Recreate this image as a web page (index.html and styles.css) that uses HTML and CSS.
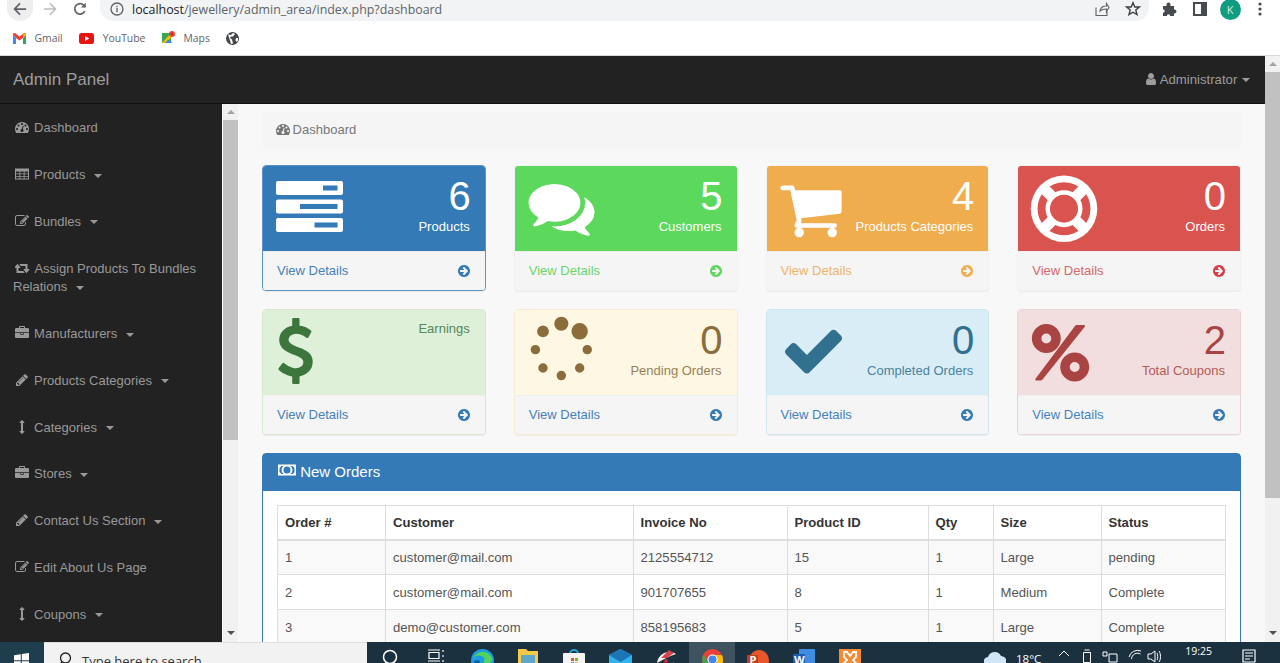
FILE: index.html
```html
<!DOCTYPE html>
<html lang="en">

<head>
    <meta charset="UTF-8">
    <title>Admin Panel</title>
    <link rel="stylesheet" href="styles.css">
</head>

<body>

    <!-- icon set -->
    <svg class="sprites" xmlns="http://www.w3.org/2000/svg">
        <symbol id="i-dashboard" viewBox="0 0 1792 1792"><path d="M384 1152q0-53-37.5-90.5t-90.5-37.5-90.5 37.5-37.5 90.5 37.5 90.5 90.5 37.5 90.5-37.5 37.5-90.5zm192-448q0-53-37.5-90.5t-90.5-37.5-90.5 37.5-37.5 90.5 37.5 90.5 90.5 37.5 90.5-37.5 37.5-90.5zm428 481l101-382q6-26-7.5-48.5t-38.5-29.5-48 7-30 39l-101 382q-60 5-107 43.5t-63 98.5q-20 77 20 146t117 89 146-20 89-117q16-60-6-117t-72-91zm660-33q0-53-37.5-90.5t-90.5-37.5-90.5 37.5-37.5 90.5 37.5 90.5 90.5 37.5 90.5-37.5 37.5-90.5zm-640-640q0-53-37.5-90.5t-90.5-37.5-90.5 37.5-37.5 90.5 37.5 90.5 90.5 37.5 90.5-37.5 37.5-90.5zm448 192q0-53-37.5-90.5t-90.5-37.5-90.5 37.5-37.5 90.5 37.5 90.5 90.5 37.5 90.5-37.5 37.5-90.5zm320 448q0 261-141 483-19 29-54 29h-1402q-35 0-54-29-141-221-141-483 0-182 71-348t191-286 286-191 348-71 348 71 286 191 191 286 71 348z"/></symbol>
        <symbol id="i-table" viewBox="0 0 14 14"><path fill-rule="evenodd" d="M0 1.5h14v11H0zM1 4.5v2h3.4v-2zM5.3 4.5v2h3.4v-2zM9.6 4.5v2H13v-2zM1 7.3v2h3.4v-2zM5.3 7.3v2h3.4v-2zM9.6 7.3v2H13v-2zM1 10v1.6h3.4V10zM5.3 10v1.6h3.4V10zM9.6 10v1.6H13V10z"/></symbol>
        <symbol id="i-edit" viewBox="0 0 1792 1792"><path d="M888 1184l116-116-152-152-116 116v56h96v96h56zm440-720q-16-16-33 1l-350 350q-17 17-1 33t33-1l350-350q17-17 1-33zm80 594v190q0 119-84.5 203.5t-203.5 84.5h-832q-119 0-203.5-84.5t-84.5-203.5v-832q0-119 84.5-203.5t203.5-84.5h832q63 0 117 25 15 7 18 23 3 17-9 29l-49 49q-14 14-32 8-23-6-45-6h-832q-66 0-113 47t-47 113v832q0 66 47 113t113 47h832q66 0 113-47t47-113v-126q0-13 9-22l64-64q15-15 35-7t20 29zm-96-738l288 288-672 672h-288v-288zm444 132l-92 92-288-288 92-92q28-28 68-28t68 28l152 152q28 28 28 68t-28 68z"/></symbol>
        <symbol id="i-retweet" viewBox="0 0 1920 1792"><path d="M1216 1504q0 13-9.5 22.5t-22.5 9.5h-960q-8 0-13.5-2t-9-7-5.5-8-3-11.5-1-11.5v-600h-192q-26 0-45-19t-19-45q0-24 15-41l320-384q19-22 49-22t49 22l320 384q15 17 15 41 0 26-19 45t-45 19h-192v384h576q16 0 25 11l160 192q7 10 7 21zm640-416q0 24-15 41l-320 384q-20 23-49 23t-49-23l-320-384q-15-17-15-41 0-26 19-45t45-19h192v-384h-576q-16 0-25-12l-160-192q-7-9-7-20 0-13 9.5-22.5t22.5-9.5h960q8 0 13.5 2t9 7 5.5 8 3 11.5 1 11.5v600h192q26 0 45 19t19 45z"/></symbol>
        <symbol id="i-briefcase" viewBox="0 0 1792 1792"><path d="M640 256h512v-128h-512v128zm1152 640v480q0 66-47 113t-113 47h-1472q-66 0-113-47t-47-113v-480h672v160q0 26 19 45t45 19h320q26 0 45-19t19-45v-160h672zm-768 0v128h-256v-128h256zm768-480v384h-1792v-384q0-66 47-113t113-47h352v-160q0-40 28-68t68-28h576q40 0 68 28t28 68v160h352q66 0 113 47t47 113z"/></symbol>
        <symbol id="i-pencil" viewBox="0 0 1792 1792"><path d="M491 1536l91-91-235-235-91 91v107h128v128h107zm523-928q0-22-22-22-10 0-17 7l-542 542q-7 7-7 17 0 22 22 22 10 0 17-7l542-542q7-7 7-17zm-54-192l416 416-832 832h-416v-416zm683 96q0 53-37 90l-166 166-416-416 166-165q36-38 90-38 53 0 91 38l235 234q37 39 37 91z"/></symbol>
        <symbol id="i-arrows-v" viewBox="0 0 1792 1792"><path d="M1216 320q0 26-19 45t-45 19h-128v1024h128q26 0 45 19t19 45-19 45l-256 256q-19 19-45 19t-45-19l-256-256q-19-19-19-45t19-45 45-19h128v-1024h-128q-26 0-45-19t-19-45 19-45l256-256q19-19 45-19t45 19l256 256q19 19 19 45z"/></symbol>
        <symbol id="i-user" viewBox="0 0 1792 1792"><path d="M1536 1399q0 109-62.5 187t-150.5 78h-854q-88 0-150.5-78t-62.5-187q0-85 8.5-160.5t31.5-152 58.5-131 94-89 134.5-34.5q131 128 313 128t313-128q76 0 134.5 34.5t94 89 58.5 131 31.5 152 8.5 160.5zm-256-887q0 159-112.5 271.5t-271.5 112.5-271.5-112.5-112.5-271.5 112.5-271.5 271.5-112.5 271.5 112.5 112.5 271.5z"/></symbol>
        <symbol id="i-arrow" viewBox="0 0 1792 1792"><path d="M1413 896q0-27-18-45l-91-91-362-362q-18-18-45-18t-45 18l-91 91q-18 18-18 45t18 45l189 189h-502q-26 0-45 19t-19 45v128q0 26 19 45t45 19h502l-189 189q-19 19-19 45t19 45l91 91q18 18 45 18t45-18l362-362 91-91q18-18 18-45zm251 0q0 209-103 385.5t-279.5 279.5-385.5 103-385.5-103-279.5-279.5-103-385.5 103-385.5 279.5-279.5 385.5-103 385.5 103 279.5 279.5 103 385.5z"/></symbol>
    </svg>

    <header class="browser">
        <div class="toolbar">
            <div class="tool-btn tool-back">
                <svg width="14" height="14" viewBox="0 0 16 16" fill="none" stroke="#5f6368" stroke-width="2"><path d="M15 8H2M8 1.5 1.8 8 8 14.5"/></svg>
            </div>
            <div class="tool-btn">
                <svg width="14" height="14" viewBox="0 0 16 16" fill="none" stroke="#b9bbbe" stroke-width="1.8"><path d="M1 8h13M8 1.5 14.2 8 8 14.5"/></svg>
            </div>
            <div class="tool-btn">
                <svg width="14" height="14" viewBox="0 0 16 16" fill="none" stroke="#5f6368" stroke-width="2"><path d="M13.4 10.5A6 6 0 1 1 12.3 3.6L14 5.5"/><path d="M14.6 0.8v5.6H9" fill="#5f6368" stroke="none"/></svg>
            </div>
            <div class="omnibox">
                <svg class="omni-info" width="14" height="14" viewBox="0 0 15 15" fill="none" stroke="#5f6368" stroke-width="1.4"><circle cx="7.5" cy="7.5" r="6.4"/><path d="M7.5 6.5v4.5M7.5 4v1.6"/></svg>
                <span class="url"><b>localhost</b>/jewellery/admin_area/index.php?dashboard</span>
                <svg class="omni-share" width="16" height="16" viewBox="0 0 16 16" fill="none" stroke="#5f6368" stroke-width="1.1"><path d="M2 6.5v8h11v-4M6 10c.5-3.5 3-5 6.5-5V2.5L15 6.5l-2.5 4V8C9.5 8 7.5 8.5 6 10z"/></svg>
                <svg class="omni-star" width="16" height="16" viewBox="0 0 16 16" fill="none" stroke="#3c4043" stroke-width="1.4"><path d="M8 1.8 9.8 6h4.6l-3.6 3 1.2 4.6L8 11.2l-4 2.4L5.2 9 1.6 6h4.6z"/></svg>
            </div>
            <div class="ext-btn">
                <svg width="16" height="16" viewBox="0 0 16 16" fill="#474a4e"><path d="M1 5h3.5V3.5a2 2 0 0 1 4 0V5H12v3.5h.5a2 2 0 0 1 0 4H12V15H8v-1a2 2 0 0 0-3 0v1H1v-3.5h1a2 2 0 0 0 0-3H1z"/></svg>
            </div>
            <div class="ext-btn">
                <svg width="14" height="14" viewBox="0 0 14 14" fill="none" stroke="#474a4e" stroke-width="2"><path d="M1 1h12v12H1z"/><path d="M10 1v12" stroke-width="4"/></svg>
            </div>
            <div class="ext-btn"><span class="avatar">K</span></div>
            <div class="ext-btn">
                <svg width="4" height="14" viewBox="0 0 4 14" fill="#474a4e"><circle cx="2" cy="2" r="1.6"/><circle cx="2" cy="7" r="1.6"/><circle cx="2" cy="12" r="1.6"/></svg>
            </div>
        </div>
        <nav class="bookmarks">
            <a class="bookmark">
                <svg width="13" height="11" viewBox="0 0 13 11"><path d="M0 1.5V11h3V5z" fill="#4285f4"/><path d="M13 1.5V11h-3V5z" fill="#34a853"/><path d="M0 1.5C0 0 1.6-.4 2.6.4L6.5 3.4 10.4.4C11.4-.4 13 0 13 1.5L10 5 6.5 7.6 3 5z" fill="#ea4335"/><path d="M10 1.3 13 0v2l-3 3z" fill="#fbbc04"/></svg>
                Gmail
            </a>
            <a class="bookmark">
                <svg width="15" height="11" viewBox="0 0 15 11"><rect width="15" height="11" rx="2.8" fill="#e8140f"/><path d="M6 3v5l4.2-2.500z" fill="#fff"/></svg>
                YouTube
            </a>
            <a class="bookmark">
                <svg width="13" height="14" viewBox="0 0 13 14"><path d="M0 2h9v10H0z" fill="#34a853"/><path d="M0 12 9 2h2v3L3 12z" fill="#fbbc04"/><path d="M3 12 6 9l5 3z" fill="#4285f4"/><circle cx="10" cy="3" r="3" fill="#ea4335"/><circle cx="10" cy="3" r="1" fill="#a52714"/></svg>
                Maps
            </a>
            <a class="bookmark">
                <svg width="13" height="13" viewBox="0 0 13 13"><circle cx="6.5" cy="6.5" r="6.5" fill="#45474a"/><path d="M2 2.5 5 3l2-2 2 1-2 2.5H5L4 6l2 1.5 1 4-2 .5-1-3.5zM10 6h2v2.5L10.5 10 9.5 8z" fill="#fff"/></svg>
            </a>
        </nav>
    </header>

    <div class="app">
        <div class="app-page">
            <div class="navbar">
                <a class="brand">Admin Panel</a>
                <a class="user-menu">
                    <svg class="fa"><use href="#i-user"/></svg>
                    Administrator <span class="caret"></span>
                </a>
            </div>

            <div class="app-body">
                <ul class="sidebar">
                    <li><svg class="fa"><use href="#i-dashboard"/></svg> Dashboard</li>
                    <li><svg class="fa"><use href="#i-table"/></svg> Products <span class="caret"></span></li>
                    <li><svg class="fa"><use href="#i-edit"/></svg> Bundles <span class="caret"></span></li>
                    <li><svg class="fa fa-wide"><use href="#i-retweet"/></svg> Assign Products To Bundles Relations <span class="caret"></span></li>
                    <li><svg class="fa"><use href="#i-briefcase"/></svg> Manufacturers <span class="caret"></span></li>
                    <li><svg class="fa"><use href="#i-pencil"/></svg> Products Categories <span class="caret"></span></li>
                    <li><svg class="fa"><use href="#i-arrows-v"/></svg> Categories <span class="caret"></span></li>
                    <li><svg class="fa"><use href="#i-briefcase"/></svg> Stores <span class="caret"></span></li>
                    <li><svg class="fa"><use href="#i-pencil"/></svg> Contact Us Section <span class="caret"></span></li>
                    <li><svg class="fa"><use href="#i-edit"/></svg> Edit About Us Page</li>
                    <li><svg class="fa"><use href="#i-arrows-v"/></svg> Coupons <span class="caret"></span></li>
                </ul>
                <div class="scrollbar scrollbar-side">
                    <span class="arrow-up"></span>
                    <span class="thumb thumb-side"></span>
                    <span class="arrow-down"></span>
                </div>

                <main class="content">
                    <div class="breadcrumb"><svg class="fa"><use href="#i-dashboard"/></svg> Dashboard</div>

                    <div class="stats">
                        <div class="stat stat-primary">
                            <div class="stat-head">
                                <svg class="stat-icon" viewBox="0 0 66 66">
                                    <rect y="5" width="67" height="14" rx="2" fill="#fff"/>
                                    <rect x="47" y="9.5" width="14.5" height="5" fill="#337ab7"/>
                                    <rect y="23.5" width="67" height="14" rx="2" fill="#fff"/>
                                    <rect x="24" y="28" width="37.5" height="5" fill="#337ab7"/>
                                    <rect y="42" width="67" height="14" rx="2" fill="#fff"/>
                                    <rect x="38.5" y="46.5" width="23" height="5" fill="#337ab7"/>
                                </svg>
                                <div class="stat-text"><div class="huge">6</div><div>Products</div></div>
                            </div>
                            <a class="stat-foot">View Details <svg class="fa-arrow"><use href="#i-arrow"/></svg></a>
                        </div>
                        <div class="stat stat-green">
                            <div class="stat-head">
                                <svg class="stat-icon" viewBox="-15 40 1792 1792"><path d="M1408 768q0 139-94 257t-256.5 186.5-353.5 68.5q-86 0-176-16-124 88-278 128-36 9-86 16h-3q-11 0-20.5-8t-11.5-21q-1-3-1-6.5t.5-6.5 2-6l2.5-5 3.5-5.5 4-5 4.5-5 4-4.5q5-6 23-25t26-29.5 22.5-29 25-38.5 20.5-44q-124-72-195-177t-71-224q0-139 94-257t256.5-186.5 353.5-68.5 353.5 68.5 256.5 186.5 94 257zm384 256q0 120-71 224.5t-195 176.5q10 24 20.5 44t25 38.5 22.5 29 26 29.5 23 25q1 1 4 4.5t4.5 5 4 5 3.5 5.5l2.5 5 2 6 .5 6.5-1 6.5q-3 14-13 22t-22 7q-50-7-86-16-154-40-278-128-90 16-176 16-271 0-472-132 58 4 88 4 161 0 309-45t264-129q125-92 192-212t67-254q0-77-23-152 129 71 204 178t75 230z"/></svg>
                                <div class="stat-text"><div class="huge">5</div><div>Customers</div></div>
                            </div>
                            <a class="stat-foot">View Details <svg class="fa-arrow"><use href="#i-arrow"/></svg></a>
                        </div>
                        <div class="stat stat-orange">
                            <div class="stat-head">
                                <svg class="stat-icon" viewBox="54 0 1792 1792"><path d="M704 1536q0 52-38 90t-90 38-90-38-38-90 38-90 90-38 90 38 38 90zm896 0q0 52-38 90t-90 38-90-38-38-90 38-90 90-38 90 38 38 90zm128-1088v512q0 24-16.5 42.5t-40.5 21.5l-1044 122q13 60 13 70 0 16-24 64h920q26 0 45 19t19 45-19 45-45 19h-1024q-26 0-45-19t-19-45q0-11 8-31.5t16-36 21.5-40 15.5-29.5l-177-823h-204q-26 0-45-19t-19-45 19-45 45-19h256q16 0 28.5 6.5t19.5 15.5 13 24.5 8 26 5.5 29.5 4.5 26h1201q26 0 45 19t19 45z"/></svg>
                                <div class="stat-text"><div class="huge">4</div><div>Products Categories</div></div>
                            </div>
                            <a class="stat-foot">View Details <svg class="fa-arrow"><use href="#i-arrow"/></svg></a>
                        </div>
                        <div class="stat stat-red">
                            <div class="stat-head">
                                <svg class="stat-icon" viewBox="0 0 66 66">
                                    <circle cx="33" cy="32.7" r="33.3" fill="#fff"/>
                                    <circle cx="33" cy="32.7" r="26.5" fill="#d9534f"/>
                                    <path d="M12 11.7 54 53.7M54 11.7 12 53.7" stroke="#fff" stroke-width="11"/>
                                    <circle cx="33" cy="32.7" r="18.5" fill="#fff"/>
                                    <circle cx="33" cy="32.7" r="14" fill="#d9534f"/>
                                </svg>
                                <div class="stat-text"><div class="huge">0</div><div>Orders</div></div>
                            </div>
                            <a class="stat-foot">View Details <svg class="fa-arrow"><use href="#i-arrow"/></svg></a>
                        </div>

                        <div class="stat stat-success">
                            <div class="stat-head">
                                <svg class="stat-icon" viewBox="365 54 1792 1792"><path d="M1362 1185q0 153-99.5 263.5t-258.5 136.5v175q0 14-9 23t-23 9h-135q-13 0-22.5-9.5t-9.5-22.5v-175q-66-9-127.5-31t-101.5-44.5-74-48-46.5-37.5-17.5-18q-17-21-2-41l103-135q7-10 23-12 15-2 24 9l2 2q113 99 243 125 37 8 74 8 81 0 142.5-43t61.5-122q0-28-15-53t-33.5-42-58.5-37.5-66-32-80-32.5q-39-16-61.5-25t-61.5-26.5-62.5-31-56.5-35.5-53.5-42.5-43.5-49-35.5-58-21-66.5-8.5-78q0-138 98-242t255-134v-180q0-13 9.5-22.5t22.5-9.5h135q14 0 23 9t9 23v176q57 6 110.5 23t87 33.5 63.5 37.5 39 29 15 14q17 18 5 38l-81 146q-8 15-23 16-14 3-27-7-3-3-14.5-12t-39-26.5-58.5-32-74.5-26-85.5-11.5q-95 0-155 43t-60 111q0 26 8.5 48t29.5 41.5 39.5 33 56 31 60.5 27 70 27.5q53 20 81 31.5t76 35 75.5 42.5 62 50 53 63.5 31.5 76.5 13 94z"/></svg>
                                <div class="stat-text"><div class="soft">Earnings</div></div>
                            </div>
                            <a class="stat-foot">View Details <svg class="fa-arrow"><use href="#i-arrow"/></svg></a>
                        </div>
                        <div class="stat stat-warning">
                            <div class="stat-head">
                                <svg class="stat-icon" viewBox="-9 91 1792 1792"><path d="M526 1394q0 53-37.5 90.5t-90.5 37.5q-52 0-90-38t-38-90q0-53 37.5-90.5t90.5-37.5 90.5 37.5 37.5 90.5zm498 206q0 53-37.5 90.5t-90.5 37.5-90.5-37.5-37.5-90.5 37.5-90.5 90.5-37.5 90.5 37.5 37.5 90.5zm-704-704q0 53-37.5 90.5t-90.5 37.5-90.5-37.5-37.5-90.5 37.5-90.5 90.5-37.5 90.5 37.5 37.5 90.5zm1202 498q0 52-38 90t-90 38q-53 0-90.5-37.5t-37.5-90.5 37.5-90.5 90.5-37.5 90.5 37.5 37.5 90.5zm-964-996q0 66-47 113t-113 47-113-47-47-113 47-113 113-47 113 47 47 113zm1170 498q0 53-37.5 90.5t-90.5 37.5-90.5-37.5-37.5-90.5 37.5-90.5 90.5-37.5 90.5 37.5 37.5 90.5zm-640-704q0 80-56 136t-136 56-136-56-56-136 56-136 136-56 136 56 56 136zm530 206q0 93-66 158.5t-158 65.5q-93 0-158.5-65.5t-65.5-158.5q0-92 65.5-158t158.5-66q92 0 158 66t66 158z"/></svg>
                                <div class="stat-text"><div class="huge">0</div><div class="soft">Pending Orders</div></div>
                            </div>
                            <a class="stat-foot">View Details <svg class="fa-arrow"><use href="#i-arrow"/></svg></a>
                        </div>
                        <div class="stat stat-info">
                            <div class="stat-head">
                                <svg class="stat-icon" viewBox="-15 69 1792 1792"><path d="M1671 566q0 40-28 68l-724 724-136 136q-28 28-68 28t-68-28l-136-136-362-362q-28-28-28-68t28-68l136-136q28-28 68-28t68 28l294 295 656-657q28-28 68-28t68 28l136 136q28 28 28 68z"/></svg>
                                <div class="stat-text"><div class="huge">0</div><div class="soft">Completed Orders</div></div>
                            </div>
                            <a class="stat-foot">View Details <svg class="fa-arrow"><use href="#i-arrow"/></svg></a>
                        </div>
                        <div class="stat stat-danger">
                            <div class="stat-head">
                                <svg class="stat-icon" viewBox="0 0 66 66">
                                    <circle cx="15.3" cy="18.5" r="9.7" fill="none" stroke="#a94442" stroke-width="9.5"/>
                                    <circle cx="43.7" cy="47" r="9.7" fill="none" stroke="#a94442" stroke-width="9.5"/>
                                    <path d="M46 5h6.8c1 0 1.5 1 1 1.8L11.5 59.5c-.5.7-1 1-1.8 1H5.5c-1 0-1.5-1-1-1.8L44 6c.5-.7 1-1 2-1z" fill="#a94442"/>
                                </svg>
                                <div class="stat-text"><div class="huge">2</div><div class="soft">Total Coupons</div></div>
                            </div>
                            <a class="stat-foot">View Details <svg class="fa-arrow"><use href="#i-arrow"/></svg></a>
                        </div>
                    </div>

                    <section class="orders">
                        <h3 class="orders-title">
                            <svg width="18" height="14" viewBox="0 0 18 14"><path fill="#fff" fill-rule="evenodd" d="M0 1.5h18v11H0zM9 3.5a3.5 3.5 0 1 0 0 7 3.5 3.5 0 0 0 0-7zM3.5 3 1.5 5v4l2 2h2A5 5 0 0 1 5.5 3zM14.5 3h-2a5 5 0 0 1 0 8h2l2-2V5z"/></svg>
                            New Orders
                        </h3>
                        <div class="orders-body">
                            <table class="orders-table">
                                <thead>
                                    <tr><th class="col-order">Order #</th><th class="col-customer">Customer</th><th class="col-invoice">Invoice No</th><th class="col-product">Product ID</th><th class="col-qty">Qty</th><th class="col-size">Size</th><th>Status</th></tr>
                                </thead>
                                <tbody>
                                    <tr><td>1</td><td>customer@mail.com</td><td>2125554712</td><td>15</td><td>1</td><td>Large</td><td>pending</td></tr>
                                    <tr><td>2</td><td>customer@mail.com</td><td>901707655</td><td>8</td><td>1</td><td>Medium</td><td>Complete</td></tr>
                                    <tr><td>3</td><td>demo@customer.com</td><td>858195683</td><td>5</td><td>1</td><td>Large</td><td>Complete</td></tr>
                                </tbody>
                            </table>
                        </div>
                    </section>
                </main>
            </div>
        </div>
        <div class="scrollbar scrollbar-page">
            <span class="arrow-up"></span>
            <span class="thumb thumb-page"></span>
            <span class="arrow-down"></span>
        </div>
    </div>

    <footer class="taskbar">
        <div class="start">
            <svg width="15" height="15" viewBox="0 0 15 15" fill="#fff"><path d="M0 2.2 6.8 1.2v6H0zM7.8 1 15 0v7.2H7.800zM0 8.2h6.8v6L0 13.2zM7.800 8.2H15V15l-7.200-1z"/></svg>
        </div>
        <div class="search">
            <svg width="15" height="15" viewBox="0 0 15 15" fill="none" stroke="#222" stroke-width="1.3"><circle cx="8.5" cy="6" r="5"/><path d="M5 10 1 14"/></svg>
            Type here to search
        </div>
        <div class="task-slot">
            <svg width="16" height="16" viewBox="0 0 16 16" fill="none" stroke="#fff" stroke-width="1.5"><circle cx="8" cy="8" r="6.5"/></svg>
        </div>
        <div class="task-slot">
            <svg width="18" height="16" viewBox="0 0 18 16" fill="none" stroke="#fff" stroke-width="1.2"><path d="M1 1h12M1 12h12M2 3.5h10v6H2zM16 1v2M16 6v2M16 11v2"/></svg>
        </div>
        <div class="task-slot">
            <svg width="23" height="23" viewBox="0 0 23 23"><circle cx="11.5" cy="11.5" r="11.5" fill="#1b9de2"/><path d="M2 10C4 2 17 0 21 9c1 4-3 6-7 5-2-1-1-3 0-4C10 5 4 6 2 10z" fill="#53d35a"/><path d="M3 12c0 6 5 10 10 8-4 0-6-4-4-8-2-1-4-1-6 0z" fill="#0c59a4"/></svg>
        </div>
        <div class="task-slot">
            <svg width="20" height="18" viewBox="0 0 20 18"><path d="M0 0h8l2 2h10v16H0z" fill="#f7c948"/><path d="M3 6h14v12H3z" fill="#5ea8c9"/></svg>
        </div>
        <div class="task-slot">
            <svg width="22" height="20" viewBox="0 0 22 20"><path d="M7 5a4 4 0 0 1 8 0" fill="none" stroke="#21a9d8" stroke-width="1.8"/><rect y="4" width="22" height="16" rx="1" fill="#f4f4f4"/><path d="M8 9h3v3H8z" fill="#e8562a"/><path d="M12 9h3v3h-3z" fill="#7cb82a"/><path d="M8 13h3v3H8z" fill="#21a9d8"/><path d="M12 13h3v3h-3z" fill="#f5b81c"/></svg>
        </div>
        <div class="task-slot">
            <svg width="23" height="18" viewBox="0 0 23 18"><path d="M0 6 11.5 0 23 6v12H0z" fill="#31b2ea"/><path d="M0 6 11.5 13 23 6 11.5 0z" fill="#1c75b5"/></svg>
        </div>
        <div class="task-slot">
            <svg width="23" height="20" viewBox="0 0 23 20"><path d="M2 14C3 5 13 0 21 5L13 8 2 14z" fill="#f1f1f1"/><path d="M6 9 14 1l5 3-7 5z" fill="#d8434a"/><circle cx="11" cy="12" r="2" fill="#c4273a"/><path d="M2 16c5 3 12 3 17-2" fill="none" stroke="#4c9fd7" stroke-width="2"/></svg>
        </div>
        <div class="task-slot task-active">
            <svg width="21" height="21" viewBox="0 0 21 21"><circle cx="10.5" cy="10.5" r="10.5" fill="#ea4335"/><path d="M1.5 5.5 6 14l4.5 7A10.5 10.5 0 0 1 1.5 5.5z" fill="#34a853"/><path d="M10.5 6H20a10.5 10.5 0 0 1-9.5 15L15 14z" fill="#fbbc04"/><circle cx="10.5" cy="10.5" r="5" fill="#fff"/><circle cx="10.5" cy="10.5" r="4" fill="#4285f4"/></svg>
        </div>
        <div class="task-slot">
            <svg width="22" height="20" viewBox="0 0 22 20"><circle cx="12" cy="11" r="10" fill="#e8562a"/><rect y="6" width="11" height="11" rx="1" fill="#c43e1c"/><text x="2.5" y="15" class="task-letter">P</text></svg>
        </div>
        <div class="task-slot">
            <svg width="22" height="20" viewBox="0 0 22 20"><rect x="6" width="16" height="20" rx="1" fill="#3f8de0"/><rect y="5" width="12" height="12" rx="1" fill="#1f5cb4"/><text x="1" y="15" class="task-letter">W</text></svg>
        </div>
        <div class="task-slot">
            <svg width="22" height="21" viewBox="0 0 22 21"><rect width="22" height="21" fill="#f48a32"/><path d="M5 3h3l3 4 3-4h3v5l-3 3 3 3v5h-3l-3-4-3 4H5v-5l3-3-3-3z" fill="none" stroke="#fff" stroke-width="1.8"/></svg>
        </div>

        <div class="tray">
            <svg width="22" height="18" viewBox="0 0 22 18"><path d="M5 18a5 5 0 0 1-1-10 7 7 0 0 1 13-1 5.5 5.5 0 0 1 0 11z" fill="#cfe7f8"/></svg>
            <span class="tray-temp">18°C</span>
            <svg class="tray-caret" width="12" height="8" viewBox="0 0 12 8" fill="none" stroke="#fff"><path d="M1 7 6 2l5 5"/></svg>
            <svg class="tray-meet" width="10" height="14" viewBox="0 0 10 14" fill="none" stroke="#fff"><path d="M2.5 1h5M1.5 3.5h7v10h-7z"/></svg>
            <svg width="16" height="14" viewBox="0 0 16 14" fill="none" stroke="#fff"><path d="M1 3h4v4H1zM7 5h8v8H7z"/></svg>
            <svg width="14" height="14" viewBox="0 0 14 14" fill="none" stroke="#fff"><path d="M1 8a9 9 0 0 1 12-6M3.5 10a6 6 0 0 1 9-5"/></svg>
            <svg class="tray-sound" width="14" height="14" viewBox="0 0 14 14" fill="none" stroke="#fff"><path d="M1 5h3l4-3v11l-4-3H1zM10 4c1 2 1 5 0 7M12 2c2 3 2 8 0 11"/></svg>
            <span class="clock">19:25</span>
            <svg class="tray-notes" width="14" height="16" viewBox="0 0 14 16" fill="none" stroke="#fff" stroke-width="1.2"><path d="M1 1h12v12H1zM3 4h8M3 7h8M3 10h5"/></svg>
        </div>
    </footer>

</body>

</html>
```

FILE: styles.css
```css
* {
    box-sizing: border-box;
}

body {
    margin: 0;
    height: 663px;
    overflow: hidden;
    display: flex;
    flex-direction: column;
    font-family: "Liberation Sans", Arial, sans-serif;
    font-size: 14px;
    line-height: 20px;
    color: #333;
    background: #fff;
}

.sprites {
    display: none;
}

/* browser chrome */
.browser {
    height: 56px;
    flex: none;
    border-bottom: 1px solid #d8d8d8;
    font-family: "Open Sans", sans-serif;
}

.toolbar {
    display: flex;
    height: 27px;
    padding: 0 5px 0 7px;
    align-items: flex-start;
}

.tool-btn {
    width: 26px;
    height: 21px;
    margin-right: 4px;
    display: flex;
    justify-content: center;
    padding-top: 2px;
}

.tool-back {
    background: #eeeeee;
    border-radius: 0 0 13px 13px;
}

.omnibox {
    flex: 1;
    height: 21px;
    margin-left: 3px;
    margin-right: 6px;
    padding: 0 8px 3px 10px;
    display: flex;
    align-items: center;
    background: #f1f3f4;
    border-radius: 0 0 14px 14px;
}

.url {
    margin-left: 8px;
    font-size: 12.4px;
    line-height: 15px;
    color: #5f6368;
}

.url b {
    font-weight: 400;
    color: #202124;
}

.omni-share {
    margin-left: auto;
}

.omni-star {
    margin-left: 15px;
}

.ext-btn {
    width: 30px;
    height: 18px;
    display: flex;
    align-items: center;
    justify-content: center;
}

.avatar {
    width: 21px;
    height: 21px;
    flex: none;
    border-radius: 50%;
    background: #0f9d82;
    color: #cfeee6;
    font-size: 11px;
    line-height: 21px;
    text-align: center;
}

.bookmarks {
    display: flex;
    align-items: center;
    height: 28px;
    padding: 0 0 6px 13px;
}

.bookmark {
    display: flex;
    align-items: center;
    gap: 8.5px;
    margin-right: 16.5px;
    font-size: 10.4px;
    color: #5f6368;
}

/* app */
.app {
    flex: 1;
    min-height: 0;
    display: flex;
    overflow: hidden;
}

.app-page {
    flex: 1;
    min-width: 0;
    display: flex;
    flex-direction: column;
}

.navbar {
    height: 48px;
    flex: none;
    display: flex;
    align-items: center;
    justify-content: space-between;
    padding: 0 15px 0 13px;
    background: #222;
    border-bottom: 1px solid #111;
    color: #9d9d9d;
}

.brand {
    font-size: 17px;
}

.user-menu {
    font-size: 13.2px;
    white-space: nowrap;
}

.user-menu .fa {
    margin-right: -1px;
}

.fa {
    width: 14px;
    height: 14px;
    vertical-align: -2px;
    fill: currentColor;
}

.fa-wide {
    width: 15px;
}

.caret {
    display: inline-block;
    margin-left: 1px;
    vertical-align: middle;
    border-top: 4px solid;
    border-right: 4px solid transparent;
    border-left: 4px solid transparent;
}

.app-body {
    flex: 1;
    min-height: 0;
    display: flex;
}

.sidebar {
    width: 222px;
    flex: none;
    margin: 0;
    padding: 1.2px 0 0;
    list-style: none;
    overflow: hidden;
    background: #222;
    color: #999;
    font-size: 13px;
    line-height: 18.5px;
}

.sidebar li {
    padding: 14.15px 13px;
}

.sidebar .fa {
    margin: 0 1.5px 0 2px;
}

.sidebar .caret {
    margin-left: 5px;
}

/* fake scrollbars, the page is clipped to the window */
.scrollbar {
    width: 15px;
    flex: none;
    display: flex;
    flex-direction: column;
    align-items: center;
    background: #f1f1f1;
}

.scrollbar-side {
    width: 16px;
    border-left: 1px solid #fff;
}

.arrow-up,
.arrow-down {
    flex: none;
    border-right: 4px solid transparent;
    border-left: 4px solid transparent;
}

.arrow-up {
    margin-top: 6px;
    border-bottom: 4px solid #a3a3a3;
}

.arrow-down {
    margin-top: auto;
    margin-bottom: 7px;
    border-top: 4px solid #505050;
}

.thumb {
    width: 100%;
    flex: none;
    background: #c1c1c1;
}

.thumb-side {
    height: 320px;
    margin-top: 6px;
}

.thumb-page {
    height: 426px;
    margin-top: 6px;
}

/* main */
.content {
    flex: 1;
    min-width: 0;
    overflow: hidden;
    padding: 8px 24px 0;
    background: #f8f8f8;
}

.breadcrumb {
    height: 36px;
    padding: 8px 13px;
    margin-bottom: 17px;
    background: #f5f5f5;
    border-radius: 4px;
    font-size: 13px;
    color: #777;
}

.breadcrumb .fa {
    margin: 0 -1px 0 1px;
}

.stats {
    display: grid;
    grid-template-columns: repeat(4, 1fr);
    column-gap: 28px;
    row-gap: 18.5px;
}

.stat {
    display: flex;
    flex-direction: column;
    height: 125.5px;
    border: 1px solid #f2f2f2;
    border-radius: 4px;
    background: #fff;
    box-shadow: 0 1px 1px rgba(0, 0, 0, .05);
    font-size: 13px;
}

.stat-head {
    height: 85px;
    flex: none;
    display: flex;
    justify-content: space-between;
    padding: 9px 15px 9px 13px;
    border-radius: 3px 3px 0 0;
}

.stat-icon {
    width: 66px;
    height: 66px;
    flex: none;
    margin-top: 1px;
    overflow: visible;
    fill: currentColor;
}

.stat-text {
    text-align: right;
}

.soft {
    opacity: .85;
}

.huge {
    margin-right: -1px;
    font-size: 40px;
    line-height: 42px;
}

.stat-foot {
    flex: 1;
    display: flex;
    align-items: center;
    justify-content: space-between;
    padding: 0 14px;
    background: #f5f5f5;
    border-top: 1px solid #eee;
    border-radius: 0 0 3px 3px;
    color: #4582bb;
}

.fa-arrow {
    width: 14px;
    height: 14px;
    fill: #337ab7;
}

.stat-primary {
    border-color: #5a93c6;
}

.stat-primary .stat-head {
    background: #337ab7;
    color: #fff;
}

.stat-green .stat-head {
    background: #5cd85c;
    color: #fff;
}

.stat-green .stat-foot {
    color: #6cd56c;
}

.stat-green .fa-arrow {
    fill: #5cd85c;
}

.stat-orange .stat-head {
    background: #f0ad4e;
    color: #fff;
}

.stat-orange .stat-foot {
    color: #eeb46a;
}

.stat-orange .fa-arrow {
    fill: #f0ad4e;
}

.stat-red .stat-head {
    background: #d9534f;
    color: #fff;
}

.stat-red .stat-foot {
    color: #d4686a;
}

.stat-red .fa-arrow {
    fill: #d43f4a;
}

.stat-success {
    border-color: #d8e8cf;
}

.stat-success .stat-head {
    background: #dff0d8;
    color: #3c763d;
}

.stat-warning {
    border-color: #f8ecd4;
}

.stat-warning .stat-head {
    background: #fdf7e3;
    color: #8a6d3b;
}

.stat-info {
    border-color: #cfe6ef;
}

.stat-info .stat-head {
    background: #d9edf7;
    color: #31708f;
}

.stat-danger {
    border-color: #ebd4d7;
}

.stat-danger .stat-head {
    background: #f2dede;
    color: #a94442;
}

/* orders panel */
.orders {
    margin-top: 18px;
    border: 1px solid #337ab7;
    border-radius: 4px;
    background: #fff;
}

.orders-title {
    height: 37px;
    margin: 0;
    padding: 8px 15px;
    background: #337ab7;
    color: #fff;
    font-size: 15px;
    font-weight: 400;
}

.orders-body {
    padding: 14px;
}

.orders-table {
    width: 100%;
    border-collapse: collapse;
    table-layout: fixed;
    font-size: 13.1px;
    color: #555;
}

.orders-table th,
.orders-table td {
    height: 34.8px;
    padding: 2px 7px 0;
    border: 1px solid #ddd;
    text-align: left;
}

.orders-table th {
    color: #333;
    border-bottom-width: 2px;
}

.orders-table tbody tr:nth-child(odd) {
    background: #f9f9f9;
}

.col-order { width: 108px; }
.col-customer { width: 247.5px; }
.col-invoice { width: 154px; }
.col-product { width: 141px; }
.col-qty { width: 65px; }
.col-size { width: 108px; }

/* taskbar, taller than the visible strip */
.taskbar {
    height: 21px;
    flex: none;
    display: flex;
    overflow: hidden;
    background: #1c3140;
    color: #fff;
    font-family: "Open Sans", sans-serif;
}

.start {
    width: 44px;
    flex: none;
    padding: 11px 0 0 14px;
    background: #1e3e4e;
}

.search {
    width: 323px;
    flex: none;
    display: flex;
    gap: 10px;
    padding: 9px 0 0 13px;
    background: #f2f2f2;
    border-top: 1px solid #ddd;
    color: #333;
    font-size: 13px;
    line-height: 18px;
}

.task-slot {
    width: 46px;
    height: 40px;
    flex: none;
    display: flex;
    justify-content: center;
    padding-top: 7px;
}

.task-active {
    background: #3e5260;
}

.task-letter {
    font-size: 11px;
    font-weight: 700;
    fill: #fff;
}

.tray {
    flex: 1;
    display: flex;
    align-items: flex-start;
    gap: 10px;
    padding: 7px 0 0 111px;
}

.tray-temp {
    font-size: 11.5px;
    line-height: 17px;
    margin-top: 1px;
}

.tray-caret {
    margin-left: 7px;
}

.tray-meet {
    margin-left: 2px;
}

.tray-sound {
    margin-left: -5px;
}

.clock {
    margin: -6px 0 0 14px;
    font-size: 10.5px;
    line-height: 17px;
}

.tray-notes {
    margin-left: 20px;
}
```
